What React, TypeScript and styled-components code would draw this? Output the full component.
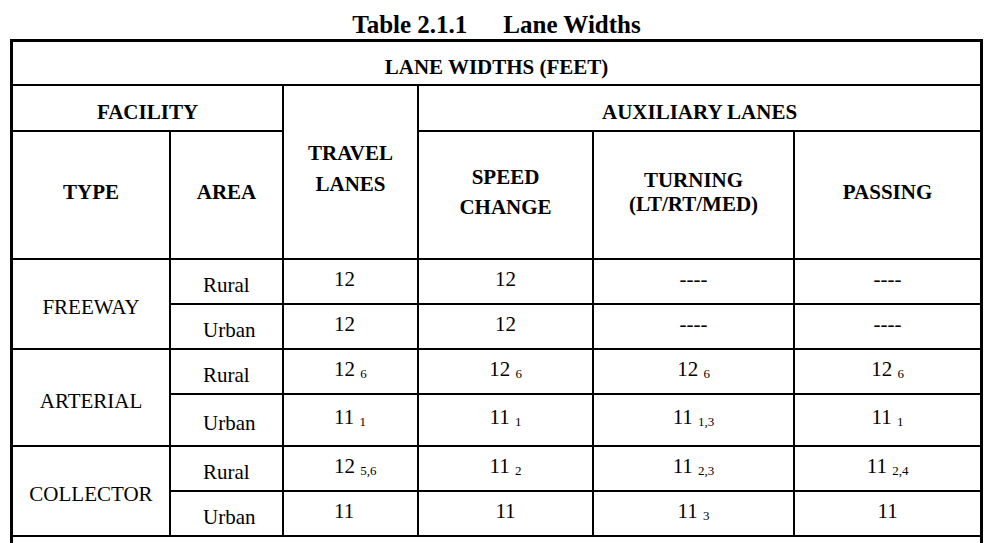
import React from "react";
import styled, { createGlobalStyle } from "styled-components";

const GlobalStyle = createGlobalStyle`
  html, body {
    margin: 0;
    padding: 0;
    background: #ffffff;
  }
  body {
    font-family: "Liberation Serif", "Times New Roman", serif;
    color: #000000;
  }
`;

const Page = styled.div`
  padding: 0 10px;
  width: 973px;
`;

const Title = styled.h1`
  box-sizing: border-box;
  margin: 0;
  height: 39px;
  padding-top: 12px;
  display: flex;
  justify-content: center;
  gap: 36px;
  font-size: 25px;
  line-height: 25px;
  font-weight: bold;
  font-family: "Liberation Serif", "Times New Roman", serif;
`;

const Table = styled.table`
  border-collapse: separate;
  border-spacing: 0;
  table-layout: fixed;
  width: 973px;
  border-left: 3px solid #000;
  border-top: 3px solid #000;
  font-family: "Liberation Serif", "Times New Roman", serif;
  font-size: 21px;
`;

const Row = styled.tr<{ $h: number }>`
  height: ${(p) => p.$h}px;
`;

const HeadCell = styled.th<{ $edge?: boolean; $pt?: number; $pb?: number; $lh?: number }>`
  box-sizing: border-box;
  font-weight: bold;
  text-align: center;
  vertical-align: middle;
  border-right: ${(p) => (p.$edge ? 3 : 2)}px solid #000;
  border-bottom: 2px solid #000;
  padding: ${(p) => p.$pt ?? 0}px 0 ${(p) => p.$pb ?? 0}px 0;
  line-height: ${(p) => p.$lh ?? 24}px;
`;

const TypeCell = styled.td`
  box-sizing: border-box;
  text-align: center;
  vertical-align: middle;
  border-right: 2px solid #000;
  border-bottom: 2px solid #000;
  padding: 6px 0 0 0;
  line-height: 24px;
`;

const AreaCell = styled.td`
  box-sizing: border-box;
  text-align: left;
  vertical-align: middle;
  border-right: 2px solid #000;
  border-bottom: 2px solid #000;
  padding: 6px 0 0 32px;
  line-height: 24px;
`;

const ValueCell = styled.td<{ $left?: boolean; $edge?: boolean }>`
  box-sizing: border-box;
  text-align: ${(p) => (p.$left ? "left" : "center")};
  vertical-align: middle;
  border-right: ${(p) => (p.$edge ? 3 : 2)}px solid #000;
  border-bottom: 2px solid #000;
  padding: 0 0 6px ${(p) => (p.$left ? 50 : 0)}px;
  line-height: 24px;
  white-space: nowrap;
`;

const NoteCell = styled.td`
  border-right: 3px solid #000;
  height: 40px;
`;

const Sub = styled.span`
  font-size: 13px;
  vertical-align: -2px;
  line-height: 1;
`;

type Val = { n: string; sub?: string };

type BodyRow = {
  type?: string;
  area: string;
  h: number;
  vals: Val[];
};

const dash: Val = { n: "----" };

const bodyRows: BodyRow[] = [
  { type: "FREEWAY", area: "Rural", h: 45, vals: [{ n: "12" }, { n: "12" }, dash, dash] },
  { area: "Urban", h: 45, vals: [{ n: "12" }, { n: "12" }, dash, dash] },
  {
    type: "ARTERIAL",
    area: "Rural",
    h: 45,
    vals: [
      { n: "12", sub: "6" },
      { n: "12", sub: "6" },
      { n: "12", sub: "6" },
      { n: "12", sub: "6" },
    ],
  },
  {
    area: "Urban",
    h: 52,
    vals: [
      { n: "11", sub: "1" },
      { n: "11", sub: "1" },
      { n: "11", sub: "1,3" },
      { n: "11", sub: "1" },
    ],
  },
  {
    type: "COLLECTOR",
    area: "Rural",
    h: 45,
    vals: [
      { n: "12", sub: "5,6" },
      { n: "11", sub: "2" },
      { n: "11", sub: "2,3" },
      { n: "11", sub: "2,4" },
    ],
  },
  {
    area: "Urban",
    h: 45,
    vals: [{ n: "11" }, { n: "11" }, { n: "11", sub: "3" }, { n: "11" }],
  },
];

const colWidths = [158, 113, 135, 175, 201, 188];

const Value = ({ v }: { v: Val }) => (
  <>
    {v.n}
    {v.sub ? (
      <>
        {" "}
        <Sub>{v.sub}</Sub>
      </>
    ) : null}
  </>
);

export default function App() {
  return (
    <Page>
      <GlobalStyle />
      <Title>
        <span>Table 2.1.1</span>
        <span>Lane Widths</span>
      </Title>
      <Table>
        <colgroup>
          {colWidths.map((w, i) => (
            <col key={i} style={{ width: w }} />
          ))}
        </colgroup>
        <thead>
          <Row $h={44}>
            <HeadCell colSpan={6} $edge $pt={8}>
              LANE WIDTHS (FEET)
            </HeadCell>
          </Row>
          <Row $h={46}>
            <HeadCell colSpan={2} $pt={8}>
              FACILITY
            </HeadCell>
            <HeadCell rowSpan={2} $pb={6} $lh={31.5}>
              TRAVEL
              <br />
              LANES
            </HeadCell>
            <HeadCell colSpan={3} $edge $pt={8}>
              AUXILIARY LANES
            </HeadCell>
          </Row>
          <Row $h={128}>
            <HeadCell $pb={6}>TYPE</HeadCell>
            <HeadCell $pb={6}>AREA</HeadCell>
            <HeadCell $pb={6} $lh={30}>
              SPEED
              <br />
              CHANGE
            </HeadCell>
            <HeadCell $pb={6} $lh={24}>
              TURNING
              <br />
              (LT/RT/MED)
            </HeadCell>
            <HeadCell $edge $pb={6}>
              PASSING
            </HeadCell>
          </Row>
        </thead>
        <tbody>
          {bodyRows.map((r, i) => (
            <Row key={i} $h={r.h}>
              {r.type ? <TypeCell rowSpan={2}>{r.type}</TypeCell> : null}
              <AreaCell>{r.area}</AreaCell>
              {r.vals.map((v, j) => (
                <ValueCell key={j} $left={j === 0} $edge={j === 3}>
                  <Value v={v} />
                </ValueCell>
              ))}
            </Row>
          ))}
          <tr>
            <NoteCell colSpan={6} />
          </tr>
        </tbody>
      </Table>
    </Page>
  );
}
